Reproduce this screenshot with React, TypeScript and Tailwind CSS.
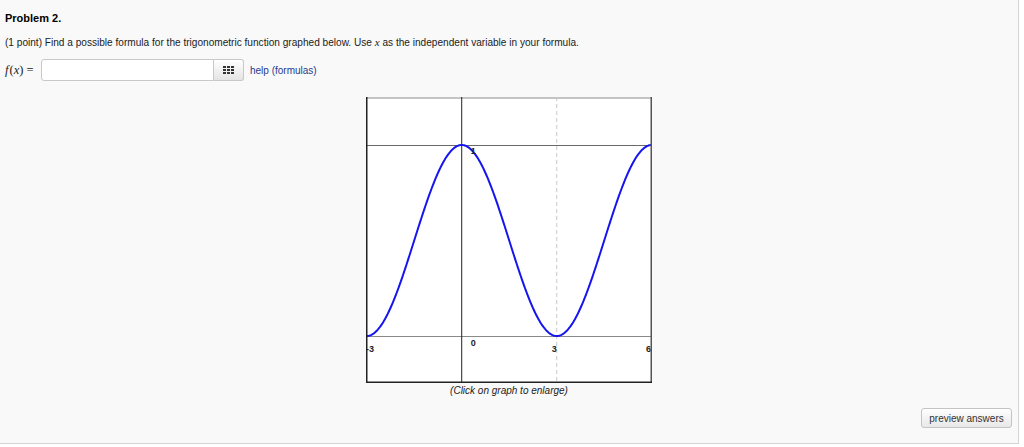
import React from "react";

function Graph() {
  const W = 286;
  const H = 286;
  const x0 = 0.7;
  const ux = 31.67;
  const yTop = 48;
  const yBot = 239;
  const pts: string[] = [];
  for (let i = 0; i <= 360; i++) {
    const xv = -3 + (9 * i) / 360;
    const px = x0 + (xv + 3) * ux;
    const c = Math.cos((Math.PI * xv) / 3);
    const py = yTop + (1 - (c + 1) / 2) * (yBot - yTop);
    pts.push(`${px.toFixed(2)},${py.toFixed(2)}`);
  }
  const xAxis = x0 + 3 * ux;
  const x3 = x0 + 6 * ux;
  return (
    <svg width={W} height={H} viewBox={`0 0 ${W} ${H}`} className="block bg-white">
      <line x1="0" y1="1" x2={W} y2="1" stroke="#c4c4c4" strokeWidth="2" />
      <line x1={x3} y1="0" x2={x3} y2={H} stroke="#c8c8c8" strokeWidth="1" strokeDasharray="4,3" />
      <line x1="0" y1={yTop + 0.5} x2={W} y2={yTop + 0.5} stroke="#6a6a6a" strokeWidth="1.2" />
      <line x1="0" y1={yBot + 0.5} x2={W} y2={yBot + 0.5} stroke="#8a8a8a" strokeWidth="1.2" />
      <line x1={xAxis} y1="0" x2={xAxis} y2={H} stroke="#222" strokeWidth="1" />
      <polyline points={pts.join(" ")} fill="none" stroke="#1515f0" strokeWidth="2" />
      <g fontFamily="'Liberation Sans', Arial, sans-serif" fontWeight="700" fontSize="9" fill="#222">
        <text x={xAxis + 9} y={yTop + 9}>1</text>
        <text x={xAxis + 9} y={yBot + 10}>0</text>
        <text x="0" y={yBot + 16}>-3</text>
        <text x={x3 - 5} y={yBot + 16}>3</text>
        <text x={W - 6} y={yBot + 16}>6</text>
      </g>
      <line x1="0.75" y1="0" x2="0.75" y2={H} stroke="#222" strokeWidth="1.5" />
      <line x1={W - 0.75} y1="0" x2={W - 0.75} y2={H} stroke="#555" strokeWidth="1.5" />
      <line x1="0" y1={H - 0.75} x2={W} y2={H - 0.75} stroke="#222" strokeWidth="1.5" />
    </svg>
  );
}

function GridIcon() {
  return (
    <svg width="11" height="8" viewBox="0 0 11 8" className="block">
      {[0, 1, 2].map((r) =>
        [0, 1, 2].map((c) => (
          <rect key={`${r}-${c}`} x={c * 4} y={r * 3} width="3" height="2" fill="#333" />
        ))
      )}
    </svg>
  );
}

export default function App() {
  return (
    <div className="w-[1019px] h-[444px] bg-[#f9f9f9] border-r border-b border-[#d4d4d4] flex flex-col px-[5px] text-[#222]" style={{ fontFamily: "'Liberation Sans', Arial, Helvetica, sans-serif" }}>
      <div className="pt-[11px] text-[11px] leading-[14px] font-bold text-black">Problem 2.</div>
      <div className="mt-[11px] text-[10.1px] leading-[13px] text-[#222]">
        (1 point) Find a possible formula for the trigonometric function graphed below. Use{" "}
        <span className="italic text-[11px]" style={{ fontFamily: "'Liberation Serif', 'Times New Roman', serif" }}>x</span>{" "}
        as the independent variable in your formula.
      </div>
      <div className="mt-[10px] flex items-center h-[22px]">
        <span className="text-[12.5px] text-[#222] w-[36px] whitespace-nowrap" style={{ fontFamily: "'Liberation Serif', 'Times New Roman', serif" }}>
          <i>f</i>
          <span className="ml-[1px]">(</span>
          <i>x</i>)<span className="ml-[3px]">=</span>
        </span>
        <div className="flex h-[22px] w-[203px]">
          <div className="flex-1 bg-white border border-[#c8c8c8] rounded-l-[3px]" />
          <div className="w-[30px] flex items-center justify-center border border-l-0 border-[#c8c8c8] rounded-r-[3px] bg-gradient-to-b from-white to-[#e4e4e4]">
            <GridIcon />
          </div>
        </div>
        <span className="ml-[6px] text-[10px] text-[#1f3b8f]">help (formulas)</span>
      </div>
      <div className="mt-[16px] flex justify-center">
        <Graph />
      </div>
      <div className="mt-[2px] text-center text-[10px] leading-[12px] italic text-[#222]">(Click on graph to enlarge)</div>
      <div className="mt-[11px] flex justify-end pr-[1px]">
        <div className="w-[91px] h-[20px] flex items-center justify-center border border-[#c4c4c4] rounded-[3px] bg-gradient-to-b from-white to-[#e8e8e8] text-[10px] text-[#333]">
          preview answers
        </div>
      </div>
    </div>
  );
}
